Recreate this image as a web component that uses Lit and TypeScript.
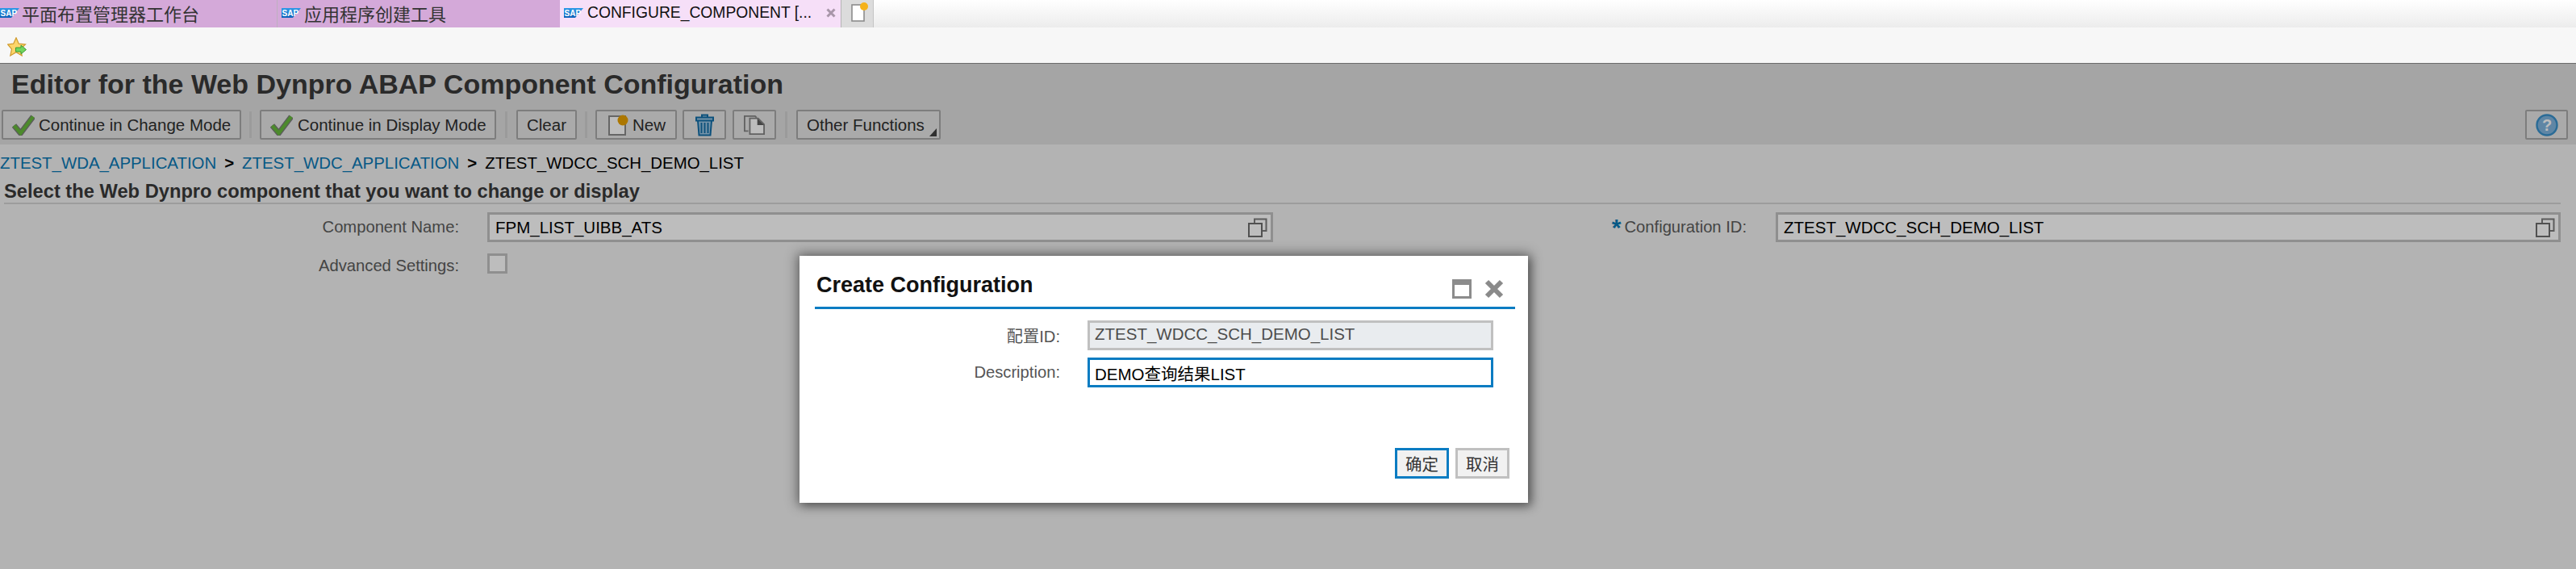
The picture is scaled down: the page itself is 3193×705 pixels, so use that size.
import { LitElement, html, css } from "lit";
import { customElement } from "lit/decorators.js";

const sap = () => html`<svg class="sap" viewBox="0 0 24 12" width="24" height="12">
  <defs><linearGradient id="sg" x1="0" y1="0" x2="0" y2="1"><stop offset="0" stop-color="#2f9be8"/><stop offset="1" stop-color="#0a5fb8"/></linearGradient></defs>
  <path d="M0 0H24L14 12H0Z" fill="url(#sg)"/>
  <text x="0.5" y="9.8" font-family="Liberation Sans" font-weight="700" font-size="10" fill="#fff">SAP</text>
</svg>`;

const check = html`<svg class="chk" viewBox="0 0 28 26" width="28" height="26">
  <path d="M2.5 13.5L10.5 23L26 2.5" fill="none" stroke="#7c7c7c" stroke-width="7"/>
  <path d="M2.5 13.5L10.5 23L26 2.5" fill="none" stroke="#67ba3c" stroke-width="4.4"/>
</svg>`;

const popup = html`<svg class="vh" viewBox="0 0 24 24" width="24" height="24"><path d="M8 6V1.5H22.5V16H18" fill="none" stroke="#7d7d7d" stroke-width="2"/><rect x="1" y="7" width="16" height="16" fill="#fff" stroke="#6e6e6e" stroke-width="2"/></svg>`;

@customElement("app-root")
export class AppRoot extends LitElement {
  static styles = css`
    :host { display: block; width: 3193px; height: 705px; overflow: hidden; font-family: "Liberation Sans", "Noto Sans CJK SC", sans-serif; background: #fff; }
    .tabs { display: flex; height: 34px; background: linear-gradient(#fff, #ececec); }
    .tab { display: flex; align-items: center; flex: none; gap: 4px; box-sizing: border-box; padding-bottom: 2px; background: #d4a9d9; border-right: 1px solid #bdb0bf; font-size: 22px; color: #333; white-space: nowrap; }
    .sap { margin-top: -1px; flex: none; }
    .t1 { width: 344px; gap: 3px; }
    .t2 { width: 350px; padding-left: 5px; border-right: none; }
    .tab.active { background: #f6dff8; color: #111; width: 349px; padding-left: 5px; gap: 5px; border-right: 1px solid #b5b5b5; font-size: 19.3px; }
    .x { margin-left: auto; margin-right: 6px; flex: none; }
    .newtab { width: 40px; flex: none; background: #dcdcdc; border-right: 1px solid #c4c4c4; box-sizing: border-box; padding: 2px 0 0 12px; }
    .fav { height: 44px; background: #f7f7f7; border-bottom: 1px solid #6c6c6c; display: flex; align-items: center; padding-left: 9px; }
    .fav svg { margin-top: 3px; }
    .page { position: relative; height: 626px; background: #f2f2f2; }
    .head { height: 100px; background: #dfdfdf; }
    .title { font-size: 34px; font-weight: 700; color: #393939; padding: 5px 0 0 14px; line-height: 40px; height: 57px; box-sizing: border-box; white-space: nowrap; }
    .bar { display: flex; align-items: center; height: 37px; padding: 0 10px 0 2px; }
    .btn { display: flex; align-items: center; flex: none; box-sizing: border-box; height: 37px; border: 2px solid #a9a9a9; border-radius: 2px; background: #e6e6e6; color: #2e2e2e; font-size: 20.5px; white-space: nowrap; }
    .sep { width: 3px; height: 33px; flex: none; background: #d1d1d1; margin: 0 10px; }
    .sep.w { margin: 0 11px; }
    .b1 { width: 297px; padding-left: 11px; gap: 5px; }
    .b2 { width: 293px; padding-left: 11px; gap: 6px; }
    .b3 { width: 75px; justify-content: center; }
    .b4 { width: 101px; padding-left: 14px; gap: 3px; }
    .b5 { width: 54px; margin-left: 7px; justify-content: center; }
    .b6 { width: 54px; margin-left: 8px; justify-content: center; }
    .b7 { width: 179px; padding-left: 11px; position: relative; }
    .corner { position: absolute; right: 3px; bottom: 2px; }
    .help { width: 53px; margin-left: auto; justify-content: center; }
    .crumb { font-size: 20.4px; color: #000; padding-top: 11px; height: 45px; line-height: 24px; box-sizing: border-box; white-space: nowrap; }
    .crumb a { color: #0a78b4; }
    .crumb b { margin: 0 10px; }
    .sect { margin: -1px 0 0 5px; width: 3169px; height: 30px; padding-top: 2px; border-bottom: 2px solid #d3d3d3; font-size: 23.7px; font-weight: 700; color: #393939; line-height: 24px; box-sizing: border-box; white-space: nowrap; }
    .form { display: grid; grid-template-columns: 604px 974px 623px 973px; margin-top: 10px; row-gap: 11px; align-items: center; }
    .lab { font-size: 20.2px; color: #5c5c5c; text-align: right; padding-right: 35px; white-space: nowrap; }
    .lab.r { padding-right: 36px; }
    .lab.adv { padding-top: 7px; }
    .star { color: #0a78b4; font-size: 30px; font-weight: 700; line-height: 20px; vertical-align: -4px; margin-right: 4px; }
    .inp { box-sizing: border-box; height: 37px; border: 3px solid #c1c1c1; background: #fff; font-size: 20.5px; color: #000; display: flex; align-items: center; justify-content: space-between; padding: 0 4px 0 7px; }
    .cb { width: 25px; height: 25px; box-sizing: border-box; border: 3px solid #c1c1c1; background: #fff; }
    .vh { display: block; }
    .overlay { position: absolute; inset: 0; background: rgba(0, 0, 0, 0.26); }
    .dlg { position: absolute; left: 991px; top: 238px; width: 903px; height: 306px; background: #fff; box-shadow: 0 0 14px 3px rgba(0, 0, 0, 0.42), 4px 4px 10px rgba(0, 0, 0, 0.25); box-sizing: border-box; padding: 0 16px 0 19px; display: flex; flex-direction: column; }
    .dh { height: 63px; border-bottom: 3px solid #0a7cc2; display: flex; align-items: flex-end; justify-content: space-between; flex: none; }
    .dt { font-size: 27px; font-weight: 700; color: #111; line-height: 30px; margin: 0 0 12px 2px; white-space: nowrap; }
    .wbtns { display: flex; gap: 15px; margin: 0 13px 10px 0; }
    .drow { display: flex; align-items: center; margin-top: 14px; }
    .drow + .drow { margin-top: 9px; }
    .dl { width: 304px; text-align: right; font-size: 20.2px; color: #555; white-space: nowrap; }
    .di { margin-left: 34px; width: 503px; height: 37px; box-sizing: border-box; padding-left: 6px; font-size: 20.5px; display: flex; align-items: center; white-space: nowrap; }
    .di.ro { border: 3px solid #c0c0c0; background: #e9ecef; color: #4d4d4d; padding-bottom: 3px; }
    .di.ed { border: 3px solid #0a7cc2; background: #fff; color: #000; }
    .dbtns { display: flex; gap: 8px; justify-content: flex-end; margin: auto 7px 30px 0; }
    .db { width: 67px; height: 38px; box-sizing: border-box; border: 3px solid #c0c0c0; background: #f1f1f1; font-size: 20.5px; color: #333; display: flex; align-items: center; justify-content: center; }
    .db.pri { border-color: #0a7cc2; }
  `;

  render() {
    return html`
      <div class="tabs">
        <div class="tab t1">${sap()}<span>平面布置管理器工作台</span></div>
        <div class="tab t2">${sap()}<span>应用程序创建工具</span></div>
        <div class="tab active">${sap()}<span>CONFIGURE_COMPONENT [...</span>
          <svg class="x" viewBox="0 0 12 12" width="12" height="12"><path d="M1.5 1.5L10.5 10.5M10.5 1.5L1.5 10.5" stroke="#a896a9" stroke-width="3"/></svg>
        </div>
        <div class="newtab">
          <svg viewBox="0 0 24 26" width="24" height="26"><rect x="1" y="4" width="15" height="20" fill="#fff" stroke="#8c8c8c" stroke-width="1.6"/><circle cx="16" cy="6" r="5" fill="#f5b21a"/></svg>
        </div>
      </div>
      <div class="fav">
        <svg viewBox="0 0 24 24" width="24" height="24">
          <path d="M11 .8L14.3 8.2L22.5 9L16.5 14.8L18.2 23L11 18.8L3.8 23L5.5 14.8L.5 9L7.7 8.2Z" fill="#fcd56a" stroke="#cf9a2e" stroke-width="1.2"/>
          <path d="M10.5 13H17V10L23.5 15.5L17 21V18H10.5Z" fill="#71d65e" stroke="#3b9a34" stroke-width="1"/>
        </svg>
      </div>
      <div class="page">
        <div class="head">
          <div class="title">Editor for the Web Dynpro ABAP Component Configuration</div>
          <div class="bar">
            <div class="btn b1">${check}<span>Continue in Change Mode</span></div>
            <div class="sep"></div>
            <div class="btn b2">${check}<span>Continue in Display Mode</span></div>
            <div class="sep w"></div>
            <div class="btn b3">Clear</div>
            <div class="sep"></div>
            <div class="btn b4">
              <svg viewBox="0 0 27 27" width="27" height="27"><rect x="1" y="3" width="20" height="23" fill="#fff" stroke="#8a8a8a" stroke-width="2"/><circle cx="18" cy="8" r="6.5" fill="#e9a100"/></svg>
              <span>New</span>
            </div>
            <div class="btn b5">
              <svg viewBox="0 0 23 28" width="23" height="28"><path d="M8 4V1.5H15V4M1 4.5H22V8.5H1ZM3 8.5H20L18.5 26.5H4.5Z" fill="#a0c8e4" stroke="#126ea8" stroke-width="2"/><path d="M7.5 11V24M11.5 11V24M15.5 11V24" stroke="#126ea8" stroke-width="2"/></svg>
            </div>
            <div class="btn b6">
              <svg viewBox="0 0 28 26" width="26" height="26"><path d="M6 21H1V1H15L17 3" fill="none" stroke="#858585" stroke-width="2"/><path d="M8 4H19L27 12V25H8Z" fill="#fff" stroke="#858585" stroke-width="2"/><path d="M18 4L27 13H18Z" fill="#5f5f5f"/></svg>
            </div>
            <div class="sep w"></div>
            <div class="btn b7"><span>Other Functions</span><svg class="corner" viewBox="0 0 9 10" width="9" height="10"><path d="M9 0V10H0Z" fill="#404040"/></svg></div>
            <div class="btn help">
              <svg viewBox="0 0 28 28" width="28" height="28"><circle cx="14" cy="14" r="12.5" fill="#80b5df" stroke="#3991cb" stroke-width="2.4"/><text x="14" y="21" text-anchor="middle" font-family="Liberation Sans" font-weight="700" font-size="20" fill="#fff">?</text></svg>
            </div>
          </div>
        </div>
        <div class="crumb"><a>ZTEST_WDA_APPLICATION</a><b>&gt;</b><a>ZTEST_WDC_APPLICATION</a><b>&gt;</b>ZTEST_WDCC_SCH_DEMO_LIST</div>
        <div class="sect">Select the Web Dynpro component that you want to change or display</div>
        <div class="form">
          <div class="lab">Component Name:</div>
          <div class="inp"><span>FPM_LIST_UIBB_ATS</span>${popup}</div>
          <div class="lab r"><span class="star">*</span>Configuration ID:</div>
          <div class="inp"><span>ZTEST_WDCC_SCH_DEMO_LIST</span>${popup}</div>
          <div class="lab adv">Advanced Settings:</div>
          <div class="cb"></div>
        </div>
        <div class="overlay"></div>
        <div class="dlg">
          <div class="dh">
            <div class="dt">Create Configuration</div>
            <div class="wbtns">
              <svg viewBox="0 0 24 24" width="24" height="24"><rect x="1.5" y="1.5" width="21" height="21" fill="#fff" stroke="#8c8c8c" stroke-width="3"/><rect x="1" y="1" width="22" height="6" fill="#8c8c8c"/></svg>
              <svg viewBox="0 0 24 24" width="26" height="24"><path d="M3 3L21 21M21 3L3 21" stroke="#8a8a8a" stroke-width="6"/></svg>
            </div>
          </div>
          <div class="drow"><div class="dl">配置ID:</div><div class="di ro">ZTEST_WDCC_SCH_DEMO_LIST</div></div>
          <div class="drow"><div class="dl">Description:</div><div class="di ed">DEMO查询结果LIST</div></div>
          <div class="dbtns"><div class="db pri">确定</div><div class="db">取消</div></div>
        </div>
      </div>
    `;
  }
}
